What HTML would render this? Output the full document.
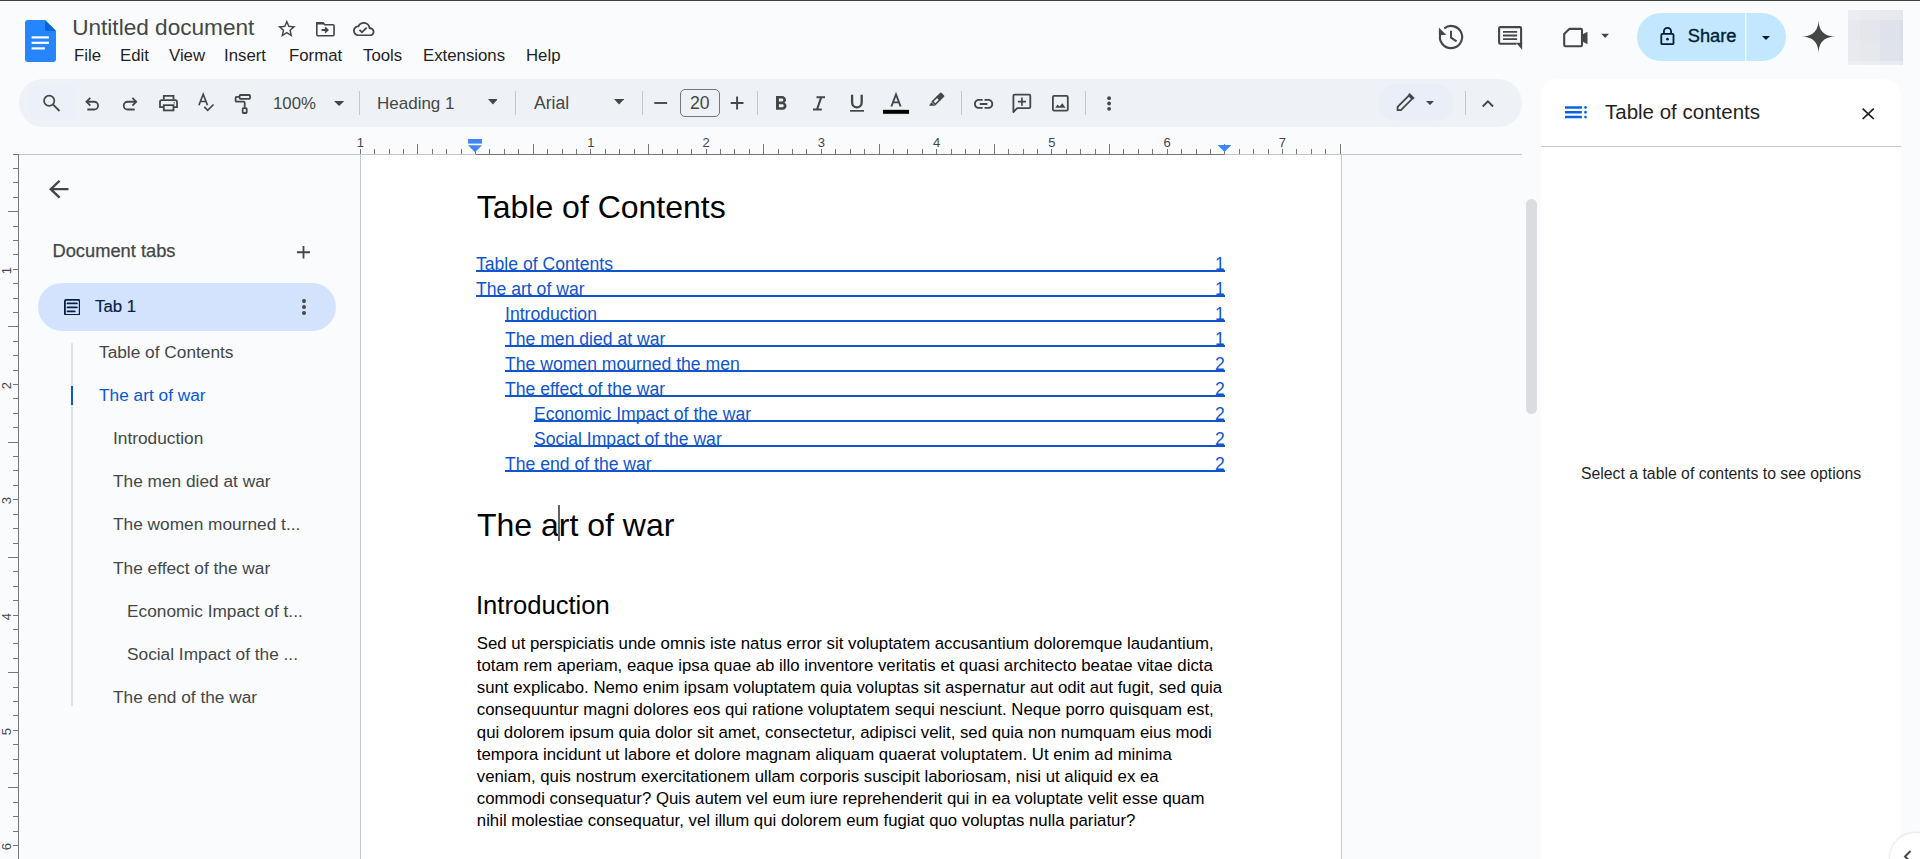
<!DOCTYPE html>
<html><head><meta charset="utf-8"><style>
html,body{margin:0;padding:0;}
body{width:1920px;height:859px;overflow:hidden;position:relative;background:#f9fbfd;font-family:"Liberation Sans",sans-serif;}
.t{position:absolute;white-space:nowrap;}
svg{display:block}
</style></head><body>
<div style="position:absolute;left:0px;top:0px;width:1920px;height:1px;background:#3c4043"></div>
<svg style="position:absolute;left:25px;top:20px;" width="31" height="42" viewBox="0 0 31 42" preserveAspectRatio="none"><path d="M3 0H20L31 11V39Q31 42 28 42H3Q0 42 0 39V3Q0 0 3 0Z" fill="#2684fc"/><path d="M20 0L31 11H22Q20 11 20 9Z" fill="#0066da"/><rect x="6.6" y="16.3" width="17.3" height="2.2" fill="#fff"/><rect x="6.6" y="21.7" width="17.3" height="2.2" fill="#fff"/><rect x="6.6" y="27.3" width="13.3" height="2.2" fill="#fff"/></svg>
<div class="t" style="left:72.2px;top:17px;font-size:22.6px;line-height:22.6px;color:#444746;font-weight:400;">Untitled document</div>
<svg style="position:absolute;left:276.3px;top:17.8px;" width="21.6" height="21.6" viewBox="0 0 24 24" preserveAspectRatio="none"><path d="M22 9.24l-7.19-.62L12 2 9.19 8.63 2 9.24l5.46 4.73L5.82 21 12 17.27 18.18 21l-1.63-7.03L22 9.24zM12 15.4l-3.76 2.27 1-4.28-3.32-2.88 4.38-.38L12 6.1l1.71 4.04 4.38.38-3.32 2.88 1 4.28L12 15.4z" fill="#444746"/></svg>
<svg style="position:absolute;left:316.3px;top:22px;overflow:visible;" width="19.6" height="14.6" viewBox="0.1 1.3 21.8 15.4" preserveAspectRatio="none"><path d="M2 2.2h6l2 2h9q1.2 0 1.2 1.2v9.2q0 1.2-1.2 1.2H2.2q-1.2 0-1.2-1.2V2.2z" fill="none" stroke="#444746" stroke-width="1.8"/><path d="M1.2 1.5h6.5l2.4 2.4H1.2z" fill="#444746"/><path d="M6.3 9.7h6.2M10.2 6.9l2.9 2.8-2.9 2.8" fill="none" stroke="#444746" stroke-width="2"/></svg>
<svg style="position:absolute;left:353.4px;top:22px;" width="21.5" height="14.2" viewBox="0 4 24 16" preserveAspectRatio="none"><path d="M19.35 10.04C18.67 6.59 15.64 4 12 4 9.11 4 6.6 5.64 5.35 8.04 2.34 8.36 0 10.91 0 14c0 3.31 2.69 6 6 6h13c2.76 0 5-2.24 5-5 0-2.64-2.05-4.78-4.65-4.960zM19 18H6c-2.21 0-4-1.790-4-4 0-2.05 1.53-3.76 3.56-3.97l1.07-.11.5-.95C8.08 7.14 9.94 6 12 6c2.62 0 4.88 1.86 5.39 4.43l.3 1.5 1.53.11c1.56.1 2.78 1.41 2.780 2.96 0 1.650-1.35 3-3 3zm-9-3.82l-2.09-2.09L6.5 13.5 10 17l6.01-6.01-1.41-1.41z" fill="#444746"/></svg>
<div class="t" style="left:74px;top:48px;font-size:16.8px;line-height:16.8px;color:#1f1f1f;font-weight:400;">File</div>
<div class="t" style="left:120px;top:48px;font-size:16.8px;line-height:16.8px;color:#1f1f1f;font-weight:400;">Edit</div>
<div class="t" style="left:169px;top:48px;font-size:16.8px;line-height:16.8px;color:#1f1f1f;font-weight:400;">View</div>
<div class="t" style="left:224px;top:48px;font-size:16.8px;line-height:16.8px;color:#1f1f1f;font-weight:400;">Insert</div>
<div class="t" style="left:289px;top:48px;font-size:16.8px;line-height:16.8px;color:#1f1f1f;font-weight:400;">Format</div>
<div class="t" style="left:363px;top:48px;font-size:16.8px;line-height:16.8px;color:#1f1f1f;font-weight:400;">Tools</div>
<div class="t" style="left:423px;top:48px;font-size:16.8px;line-height:16.8px;color:#1f1f1f;font-weight:400;">Extensions</div>
<div class="t" style="left:526px;top:48px;font-size:16.8px;line-height:16.8px;color:#1f1f1f;font-weight:400;">Help</div>
<svg style="position:absolute;left:0;top:0" width="1920" height="70" viewBox="0 0 1920 70"><path d="M1440.3 34.2A11.1 11.1 0 1 0 1444.2 28.3" fill="none" stroke="#444746" stroke-width="2.1"/><path d="M1438.9 27.6V35H1446.3Z" fill="#444746"/><path d="M1451 30.8V37.6L1456.6 41.3" fill="none" stroke="#444746" stroke-width="2"/><path d="M1516.5 43.7H1500.3Q1499.1 43.7 1499.1 42.5V28.3Q1499.1 27.1 1500.3 27.1H1519.9Q1521.1 27.1 1521.1 28.3V44" fill="none" stroke="#444746" stroke-width="2.1"/><path d="M1516 42.7H1522.1V49.7Z" fill="#444746"/><path d="M1503 31.8H1517.1M1503 35.5H1517.1M1503 39.1H1517.1" stroke="#444746" stroke-width="1.8"/><path d="M1569.3 28.9H1580.8Q1582 28.9 1582 30.1V45Q1582 46.2 1580.8 46.2H1565.4Q1564.2 46.2 1564.2 45V34Z" fill="none" stroke="#444746" stroke-width="2.1" stroke-linejoin="round"/><path d="M1581 35.3L1587.5 31.7V44.3L1581 40.7Z" fill="#444746"/><path d="M1601.3 33.8H1609L1605.15 38Z" fill="#444746"/><path d="M1661 13H1762A24 24 0 0 1 1762 61H1661A24 24 0 0 1 1661 13Z" fill="#c2e7ff"/><rect x="1745" y="13" width="1.3" height="48" fill="#f9fbfd"/><rect x="1661.3" y="33.9" width="12.2" height="10.3" rx="1" fill="none" stroke="#001d35" stroke-width="1.8"/><path d="M1663.9 33.9V31.4A3.6 3.6 0 0 1 1671.1 31.4V33.9" fill="none" stroke="#001d35" stroke-width="1.8"/><circle cx="1667.5" cy="39.2" r="1.35" fill="#001d35"/><path d="M1762 35.9H1770L1766 40Z" fill="#001d35"/><path d="M1835.90,36.60L1835.86,36.60L1835.73,36.60L1835.52,36.60L1835.23,36.61L1834.87,36.62L1834.43,36.63L1833.92,36.66L1833.36,36.70L1832.74,36.76L1832.07,36.84L1831.36,36.94L1830.62,37.08L1829.86,37.24L1829.08,37.45L1828.29,37.69L1827.50,37.97L1826.72,38.30L1825.95,38.68L1825.21,39.10L1824.49,39.57L1823.81,40.09L1823.16,40.65L1822.55,41.26L1821.99,41.91L1821.47,42.59L1821.00,43.31L1820.58,44.05L1820.20,44.82L1819.87,45.60L1819.59,46.39L1819.35,47.18L1819.14,47.96L1818.98,48.72L1818.84,49.46L1818.74,50.17L1818.66,50.84L1818.60,51.46L1818.56,52.02L1818.53,52.53L1818.52,52.97L1818.51,53.33L1818.50,53.62L1818.50,53.83L1818.50,53.96L1818.50,54.00L1818.50,53.96L1818.50,53.83L1818.50,53.62L1818.49,53.33L1818.48,52.97L1818.47,52.53L1818.44,52.02L1818.40,51.46L1818.34,50.84L1818.26,50.17L1818.16,49.46L1818.02,48.72L1817.86,47.96L1817.65,47.18L1817.41,46.39L1817.13,45.60L1816.80,44.82L1816.42,44.05L1816.00,43.31L1815.53,42.59L1815.01,41.91L1814.45,41.26L1813.84,40.65L1813.19,40.09L1812.51,39.57L1811.79,39.10L1811.05,38.68L1810.28,38.30L1809.50,37.97L1808.71,37.69L1807.92,37.45L1807.14,37.24L1806.38,37.08L1805.64,36.94L1804.93,36.84L1804.26,36.76L1803.64,36.70L1803.08,36.66L1802.57,36.63L1802.13,36.62L1801.77,36.61L1801.48,36.60L1801.27,36.60L1801.14,36.60L1801.10,36.60L1801.14,36.60L1801.27,36.60L1801.48,36.60L1801.77,36.59L1802.13,36.58L1802.57,36.57L1803.08,36.54L1803.64,36.50L1804.26,36.44L1804.93,36.36L1805.64,36.26L1806.38,36.12L1807.14,35.96L1807.92,35.75L1808.71,35.51L1809.50,35.23L1810.28,34.90L1811.05,34.52L1811.79,34.10L1812.51,33.63L1813.19,33.11L1813.84,32.55L1814.45,31.94L1815.01,31.29L1815.53,30.61L1816.00,29.89L1816.42,29.15L1816.80,28.38L1817.13,27.60L1817.41,26.81L1817.65,26.02L1817.86,25.24L1818.02,24.48L1818.16,23.74L1818.26,23.03L1818.34,22.36L1818.40,21.74L1818.44,21.18L1818.47,20.67L1818.48,20.23L1818.49,19.87L1818.50,19.58L1818.50,19.37L1818.50,19.24L1818.50,19.20L1818.50,19.24L1818.50,19.37L1818.50,19.58L1818.51,19.87L1818.52,20.23L1818.53,20.67L1818.56,21.18L1818.60,21.74L1818.66,22.36L1818.74,23.03L1818.84,23.74L1818.98,24.48L1819.14,25.24L1819.35,26.02L1819.59,26.81L1819.87,27.60L1820.20,28.38L1820.58,29.15L1821.00,29.89L1821.47,30.61L1821.99,31.29L1822.55,31.94L1823.16,32.55L1823.81,33.11L1824.49,33.63L1825.21,34.10L1825.95,34.52L1826.72,34.90L1827.50,35.23L1828.29,35.51L1829.08,35.75L1829.86,35.96L1830.62,36.12L1831.36,36.26L1832.07,36.36L1832.74,36.44L1833.36,36.50L1833.92,36.54L1834.43,36.57L1834.87,36.58L1835.23,36.59L1835.52,36.60L1835.73,36.60L1835.86,36.60L1835.90,36.60Z" fill="#444746"/><rect x="1848" y="10" width="12" height="10" fill="#ecedf0"/><rect x="1860" y="10" width="20" height="10" fill="#ebebef"/><rect x="1880" y="10" width="20" height="10" fill="#e8e9ed"/><rect x="1900" y="10" width="3" height="10" fill="#e5e7ee"/><rect x="1848" y="20" width="12" height="21" fill="#e8e9ee"/><rect x="1860" y="20" width="20" height="21" fill="#e4e6eb"/><rect x="1880" y="20" width="20" height="21" fill="#dfe2ea"/><rect x="1900" y="20" width="3" height="21" fill="#d9dee9"/><rect x="1848" y="41" width="12" height="20" fill="#e8eaee"/><rect x="1860" y="41" width="20" height="20" fill="#e6e8ec"/><rect x="1880" y="41" width="20" height="20" fill="#e0e3ea"/><rect x="1900" y="41" width="3" height="20" fill="#dadfea"/><rect x="1848" y="61" width="12" height="4" fill="#edeff2"/><rect x="1860" y="61" width="20" height="4" fill="#eceef1"/><rect x="1880" y="61" width="20" height="4" fill="#e9ebf0"/><rect x="1900" y="61" width="3" height="4" fill="#e3e7ef"/></svg>
<div class="t" style="left:1687.7px;top:27px;font-size:18.3px;line-height:18.3px;color:#001d35;font-weight:400;-webkit-text-stroke:0.35px #001d35;">Share</div>
<div style="position:absolute;left:19px;top:79px;width:1503px;height:48px;background:#eef2f7;border-radius:24px"></div>
<div style="position:absolute;left:30px;top:86px;width:45px;height:34px;background:#ebf0f9"></div>
<div style="position:absolute;left:1378px;top:84px;width:76px;height:37px;background:#e9eef9;border-radius:19px"></div>
<div class="t" style="left:273px;top:96px;font-size:16.8px;line-height:16.8px;color:#444746;font-weight:400;">100%</div>
<svg style="position:absolute;left:333.5px;top:101px;" width="10.199999999999989" height="5" viewBox="0 0 10.199999999999989 5" preserveAspectRatio="none"><path d="M0 0H10.199999999999989L5.099999999999994 5Z" fill="#444746"/></svg>
<div style="position:absolute;left:359px;top:91px;width:1px;height:24px;background:#c7c7c7"></div>
<div class="t" style="left:377px;top:95px;font-size:17px;line-height:17px;color:#444746;font-weight:400;">Heading 1</div>
<svg style="position:absolute;left:487.6px;top:99px;" width="9.799999999999955" height="5.5" viewBox="0 0 9.799999999999955 5.5" preserveAspectRatio="none"><path d="M0 0H9.799999999999955L4.899999999999977 5.5Z" fill="#444746"/></svg>
<div style="position:absolute;left:515px;top:91px;width:1px;height:24px;background:#c7c7c7"></div>
<div class="t" style="left:534px;top:95px;font-size:17.6px;line-height:17.6px;color:#444746;font-weight:400;">Arial</div>
<svg style="position:absolute;left:613.6px;top:99px;" width="10.199999999999932" height="5.5" viewBox="0 0 10.199999999999932 5.5" preserveAspectRatio="none"><path d="M0 0H10.199999999999932L5.099999999999966 5.5Z" fill="#444746"/></svg>
<div style="position:absolute;left:642px;top:91px;width:1px;height:24px;background:#c7c7c7"></div>
<div style="position:absolute;left:680px;top:89px;width:38px;height:26px;border:1.2px solid #747775;border-radius:5px"></div>
<div class="t" style="left:690px;top:95px;font-size:17.6px;line-height:17.6px;color:#444746;font-weight:400;">20</div>
<div style="position:absolute;left:757px;top:91px;width:1px;height:24px;background:#c7c7c7"></div>
<svg style="position:absolute;left:775.6px;top:96.3px;overflow:visible;" width="10.5" height="13.7" viewBox="7 4 10.75 14" preserveAspectRatio="none"><path d="M15.6 10.79c.97-.67 1.65-1.77 1.65-2.79 0-2.26-1.75-4-4-4H7v14h7.04c2.09 0 3.71-1.7 3.71-3.79 0-1.52-.86-2.82-2.15-3.42zM10 6.5h3c.83 0 1.5.67 1.5 1.5s-.67 1.5-1.5 1.5h-3v-3zm3.5 9H10v-3h3.5c.83 0 1.5.67 1.5 1.5s-.67 1.5-1.5 1.5z" fill="#444746"/></svg>
<div style="position:absolute;left:960.5px;top:91px;width:1px;height:24px;background:#c7c7c7"></div>
<svg style="position:absolute;left:973.8px;top:98.8px;overflow:visible;" width="19.2" height="9.8" viewBox="2 7 20 10" preserveAspectRatio="none"><path d="M3.9 12c0-1.71 1.39-3.1 3.1-3.1h4V7H7c-2.76 0-5 2.24-5 5s2.24 5 5 5h4v-1.9H7c-1.71 0-3.1-1.39-3.1-3.1zM8 13h8v-2H8v2zm9-6h-4v1.9h4c1.71 0 3.1 1.39 3.1 3.1s-1.39 3.1-3.1 3.1h-4V17h4c2.76 0 5-2.24 5-5s-2.24-5-5-5z" fill="#444746"/></svg>
<div style="position:absolute;left:1085px;top:91px;width:1px;height:24px;background:#c7c7c7"></div>
<svg style="position:absolute;left:1426px;top:100.7px;" width="8" height="4.099999999999994" viewBox="0 0 8 4.099999999999994" preserveAspectRatio="none"><path d="M0 0H8L4.0 4.099999999999994Z" fill="#444746"/></svg>
<div style="position:absolute;left:1465px;top:91px;width:1px;height:24px;background:#c7c7c7"></div>
<svg style="position:absolute;left:0;top:0" width="1920" height="130" viewBox="0 0 1920 130"><circle cx="49.2" cy="100.7" r="5.15" fill="none" stroke="#444746" stroke-width="1.7"/><path d="M52.9 104.4L59.5 111" stroke="#444746" stroke-width="1.8"/><path d="M90.3 97.9L86.5 101.75L90.3 105.6" fill="none" stroke="#444746" stroke-width="1.8"/><path d="M86.5 101.75H94.2A3.875 3.875 0 0 1 94.2 109.5H87.3" fill="none" stroke="#444746" stroke-width="1.8"/><path d="M132.4 97.9L136.2 101.75L132.4 105.6" fill="none" stroke="#444746" stroke-width="1.8"/><path d="M136.2 101.75H127.6A3.875 3.875 0 0 0 127.6 109.5H134.7" fill="none" stroke="#444746" stroke-width="1.8"/><path d="M163.8 99.6V95.9H173.5V99.6" fill="none" stroke="#444746" stroke-width="1.8"/><path d="M163.8 107.2H160V101.9Q160 100.1 161.8 100.1H175.2Q177 100.1 177 101.9V107.2H173.5" fill="none" stroke="#444746" stroke-width="1.8"/><rect x="163.8" y="105.2" width="9.7" height="5.2" fill="none" stroke="#444746" stroke-width="1.8"/><circle cx="174.2" cy="102.7" r="0.75" fill="#444746"/><path d="M198.9 105.3L203.2 94.3L207.5 105.3M200.3 101.5H206.1" fill="none" stroke="#444746" stroke-width="1.7"/><path d="M204.3 106.9L207.7 110.3L213.5 104.5" fill="none" stroke="#444746" stroke-width="1.7"/><rect x="239.6" y="95" width="10.4" height="3.9" rx="0.8" fill="none" stroke="#444746" stroke-width="1.8"/><path d="M239.6 96.9H236.6Q235.6 96.9 235.6 97.9V100.7Q235.6 101.7 236.6 101.7H243.7Q244.7 101.7 244.7 102.7V107.6" fill="none" stroke="#444746" stroke-width="1.8"/><rect x="242.7" y="108.1" width="4" height="4.9" rx="0.7" fill="none" stroke="#444746" stroke-width="1.8"/><path d="M654.3 103H667.1" stroke="#444746" stroke-width="1.9"/><path d="M730.7 103H743.5M737.1 96.5V109.5" stroke="#444746" stroke-width="1.9"/><path d="M816.5 97.2H825M813 109.5H821.8M821.3 97.2L817 109.5" stroke="#444746" stroke-width="2.1"/><path d="M852.1 94.8V102.5A4.8 4.8 0 0 0 861.7 102.5V94.8" fill="none" stroke="#444746" stroke-width="2.3"/><rect x="850" y="110" width="14" height="1.7" fill="#444746"/><path d="M891.4 106.5L896 94.4L900.6 106.5M893.1 102.4H898.9" fill="none" stroke="#444746" stroke-width="1.9"/><rect x="882.5" y="109.3" width="27" height="4.9" fill="#000" stroke="#fff" stroke-width="0.8"/><g transform="translate(931.4 101.6) rotate(-45)"><rect x="6.6" y="0" width="6.8" height="5.5" rx="0.9" fill="#444746"/><rect x="0.8" y="0.8" width="6.6" height="3.9" fill="none" stroke="#444746" stroke-width="1.6"/></g><path d="M929 105.8L931.3 102.2L935.4 105.8Z" fill="#444746"/><path d="M1013.4 112V95.8Q1013.4 94.7 1014.5 94.7H1029.2Q1030.3 94.7 1030.3 95.8V107.1Q1030.3 108.2 1029.2 108.2H1017.2Z" fill="none" stroke="#444746" stroke-width="1.8" stroke-linejoin="round"/><path d="M1017.9 101.6H1026M1021.95 97.4V105.8" stroke="#444746" stroke-width="1.7"/><rect x="1052.9" y="95.8" width="14.9" height="14.9" rx="1.2" fill="none" stroke="#444746" stroke-width="1.8"/><path d="M1055.2 107.8L1057.6 104.4L1059.6 106.6L1062.3 103.3L1065.6 107.8Z" fill="#444746"/><circle cx="1109.1" cy="98.2" r="1.9" fill="#444746"/><circle cx="1109.1" cy="103.5" r="1.9" fill="#444746"/><circle cx="1109.1" cy="108.8" r="1.9" fill="#444746"/><path d="M1397.6 110.1V106.8L1408.9 95.5L1412.2 98.8L1400.9 110.1Z" fill="none" stroke="#444746" stroke-width="1.8" stroke-linejoin="miter"/><path d="M1408.2 94.2L1409.7 92.9L1414.7 97.9L1413.3 99.4Z" fill="#444746"/><path d="M1482.7 106.5L1487.9 101.3L1493.1 106.5" fill="none" stroke="#444746" stroke-width="1.9"/></svg>
<svg style="position:absolute;left:0;top:0" width="1920" height="859" viewBox="0 0 1920 859"><rect x="13" y="154" width="462.6" height="1" fill="#c4c7c5"/><rect x="475.6" y="154" width="749.2" height="1" fill="#747775"/><rect x="1224.8" y="154" width="297.2" height="1" fill="#c4c7c5"/><rect x="13" y="154" width="6" height="1" fill="#747775"/><rect x="360" y="149" width="1" height="5" fill="#747775"/><rect x="374" y="149" width="1" height="5" fill="#747775"/><rect x="389" y="149" width="1" height="5" fill="#747775"/><rect x="403" y="149" width="1" height="5" fill="#747775"/><rect x="417" y="144" width="1" height="10" fill="#747775"/><rect x="432" y="149" width="1" height="5" fill="#747775"/><rect x="446" y="149" width="1" height="5" fill="#747775"/><rect x="461" y="149" width="1" height="5" fill="#747775"/><rect x="475" y="149" width="1" height="5" fill="#747775"/><rect x="489" y="149" width="1" height="5" fill="#747775"/><rect x="504" y="149" width="1" height="5" fill="#747775"/><rect x="518" y="149" width="1" height="5" fill="#747775"/><rect x="533" y="144" width="1" height="10" fill="#747775"/><rect x="547" y="149" width="1" height="5" fill="#747775"/><rect x="562" y="149" width="1" height="5" fill="#747775"/><rect x="576" y="149" width="1" height="5" fill="#747775"/><rect x="590" y="149" width="1" height="5" fill="#747775"/><rect x="605" y="149" width="1" height="5" fill="#747775"/><rect x="619" y="149" width="1" height="5" fill="#747775"/><rect x="634" y="149" width="1" height="5" fill="#747775"/><rect x="648" y="144" width="1" height="10" fill="#747775"/><rect x="662" y="149" width="1" height="5" fill="#747775"/><rect x="677" y="149" width="1" height="5" fill="#747775"/><rect x="691" y="149" width="1" height="5" fill="#747775"/><rect x="706" y="149" width="1" height="5" fill="#747775"/><rect x="720" y="149" width="1" height="5" fill="#747775"/><rect x="734" y="149" width="1" height="5" fill="#747775"/><rect x="749" y="149" width="1" height="5" fill="#747775"/><rect x="763" y="144" width="1" height="10" fill="#747775"/><rect x="778" y="149" width="1" height="5" fill="#747775"/><rect x="792" y="149" width="1" height="5" fill="#747775"/><rect x="806" y="149" width="1" height="5" fill="#747775"/><rect x="821" y="149" width="1" height="5" fill="#747775"/><rect x="835" y="149" width="1" height="5" fill="#747775"/><rect x="850" y="149" width="1" height="5" fill="#747775"/><rect x="864" y="149" width="1" height="5" fill="#747775"/><rect x="879" y="144" width="1" height="10" fill="#747775"/><rect x="893" y="149" width="1" height="5" fill="#747775"/><rect x="907" y="149" width="1" height="5" fill="#747775"/><rect x="922" y="149" width="1" height="5" fill="#747775"/><rect x="936" y="149" width="1" height="5" fill="#747775"/><rect x="951" y="149" width="1" height="5" fill="#747775"/><rect x="965" y="149" width="1" height="5" fill="#747775"/><rect x="979" y="149" width="1" height="5" fill="#747775"/><rect x="994" y="144" width="1" height="10" fill="#747775"/><rect x="1008" y="149" width="1" height="5" fill="#747775"/><rect x="1023" y="149" width="1" height="5" fill="#747775"/><rect x="1037" y="149" width="1" height="5" fill="#747775"/><rect x="1051" y="149" width="1" height="5" fill="#747775"/><rect x="1066" y="149" width="1" height="5" fill="#747775"/><rect x="1080" y="149" width="1" height="5" fill="#747775"/><rect x="1095" y="149" width="1" height="5" fill="#747775"/><rect x="1109" y="144" width="1" height="10" fill="#747775"/><rect x="1123" y="149" width="1" height="5" fill="#747775"/><rect x="1138" y="149" width="1" height="5" fill="#747775"/><rect x="1152" y="149" width="1" height="5" fill="#747775"/><rect x="1167" y="149" width="1" height="5" fill="#747775"/><rect x="1181" y="149" width="1" height="5" fill="#747775"/><rect x="1196" y="149" width="1" height="5" fill="#747775"/><rect x="1210" y="149" width="1" height="5" fill="#747775"/><rect x="1224" y="144" width="1" height="10" fill="#747775"/><rect x="1239" y="149" width="1" height="5" fill="#747775"/><rect x="1253" y="149" width="1" height="5" fill="#747775"/><rect x="1268" y="149" width="1" height="5" fill="#747775"/><rect x="1282" y="149" width="1" height="5" fill="#747775"/><rect x="1296" y="149" width="1" height="5" fill="#747775"/><rect x="1311" y="149" width="1" height="5" fill="#747775"/><rect x="1325" y="149" width="1" height="5" fill="#747775"/><rect x="1340" y="144" width="1" height="10" fill="#747775"/><rect x="18" y="154" width="1" height="705" fill="#747775"/><rect x="13" y="154" width="5" height="1" fill="#747775"/><rect x="13" y="168" width="5" height="1" fill="#747775"/><rect x="13" y="182" width="5" height="1" fill="#747775"/><rect x="13" y="197" width="5" height="1" fill="#747775"/><rect x="8" y="211" width="10" height="1" fill="#747775"/><rect x="13" y="226" width="5" height="1" fill="#747775"/><rect x="13" y="240" width="5" height="1" fill="#747775"/><rect x="13" y="254" width="5" height="1" fill="#747775"/><rect x="13" y="269" width="5" height="1" fill="#747775"/><rect x="13" y="283" width="5" height="1" fill="#747775"/><rect x="13" y="298" width="5" height="1" fill="#747775"/><rect x="13" y="312" width="5" height="1" fill="#747775"/><rect x="8" y="326" width="10" height="1" fill="#747775"/><rect x="13" y="341" width="5" height="1" fill="#747775"/><rect x="13" y="355" width="5" height="1" fill="#747775"/><rect x="13" y="370" width="5" height="1" fill="#747775"/><rect x="13" y="384" width="5" height="1" fill="#747775"/><rect x="13" y="398" width="5" height="1" fill="#747775"/><rect x="13" y="413" width="5" height="1" fill="#747775"/><rect x="13" y="427" width="5" height="1" fill="#747775"/><rect x="8" y="442" width="10" height="1" fill="#747775"/><rect x="13" y="456" width="5" height="1" fill="#747775"/><rect x="13" y="470" width="5" height="1" fill="#747775"/><rect x="13" y="485" width="5" height="1" fill="#747775"/><rect x="13" y="499" width="5" height="1" fill="#747775"/><rect x="13" y="514" width="5" height="1" fill="#747775"/><rect x="13" y="528" width="5" height="1" fill="#747775"/><rect x="13" y="543" width="5" height="1" fill="#747775"/><rect x="8" y="557" width="10" height="1" fill="#747775"/><rect x="13" y="571" width="5" height="1" fill="#747775"/><rect x="13" y="586" width="5" height="1" fill="#747775"/><rect x="13" y="600" width="5" height="1" fill="#747775"/><rect x="13" y="615" width="5" height="1" fill="#747775"/><rect x="13" y="629" width="5" height="1" fill="#747775"/><rect x="13" y="643" width="5" height="1" fill="#747775"/><rect x="13" y="658" width="5" height="1" fill="#747775"/><rect x="8" y="672" width="10" height="1" fill="#747775"/><rect x="13" y="687" width="5" height="1" fill="#747775"/><rect x="13" y="701" width="5" height="1" fill="#747775"/><rect x="13" y="715" width="5" height="1" fill="#747775"/><rect x="13" y="730" width="5" height="1" fill="#747775"/><rect x="13" y="744" width="5" height="1" fill="#747775"/><rect x="13" y="759" width="5" height="1" fill="#747775"/><rect x="13" y="773" width="5" height="1" fill="#747775"/><rect x="8" y="787" width="10" height="1" fill="#747775"/><rect x="13" y="802" width="5" height="1" fill="#747775"/><rect x="13" y="816" width="5" height="1" fill="#747775"/><rect x="13" y="831" width="5" height="1" fill="#747775"/><rect x="13" y="845" width="5" height="1" fill="#747775"/><rect x="468" y="139" width="14" height="4.6" fill="#4285f4"/><path d="M468 145.2H482L475 152.3Z" fill="#4285f4"/><path d="M1217.6 144.9H1231.4L1224.5 151.9Z" fill="#4285f4"/></svg>
<div class="t" style="left:340.30px;top:136px;width:40px;text-align:center;font-size:13px;line-height:13px;color:#444746">1</div>
<div class="t" style="left:570.84px;top:136px;width:40px;text-align:center;font-size:13px;line-height:13px;color:#444746">1</div>
<div class="t" style="left:686.11px;top:136px;width:40px;text-align:center;font-size:13px;line-height:13px;color:#444746">2</div>
<div class="t" style="left:801.38px;top:136px;width:40px;text-align:center;font-size:13px;line-height:13px;color:#444746">3</div>
<div class="t" style="left:916.65px;top:136px;width:40px;text-align:center;font-size:13px;line-height:13px;color:#444746">4</div>
<div class="t" style="left:1031.92px;top:136px;width:40px;text-align:center;font-size:13px;line-height:13px;color:#444746">5</div>
<div class="t" style="left:1147.19px;top:136px;width:40px;text-align:center;font-size:13px;line-height:13px;color:#444746">6</div>
<div class="t" style="left:1262.46px;top:136px;width:40px;text-align:center;font-size:13px;line-height:13px;color:#444746">7</div>
<div class="t" style="left:-14px;top:263.77px;width:40px;text-align:center;font-size:13px;line-height:13px;color:#444746;transform:rotate(-90deg)">1</div>
<div class="t" style="left:-14px;top:379.04px;width:40px;text-align:center;font-size:13px;line-height:13px;color:#444746;transform:rotate(-90deg)">2</div>
<div class="t" style="left:-14px;top:494.31px;width:40px;text-align:center;font-size:13px;line-height:13px;color:#444746;transform:rotate(-90deg)">3</div>
<div class="t" style="left:-14px;top:609.58px;width:40px;text-align:center;font-size:13px;line-height:13px;color:#444746;transform:rotate(-90deg)">4</div>
<div class="t" style="left:-14px;top:724.85px;width:40px;text-align:center;font-size:13px;line-height:13px;color:#444746;transform:rotate(-90deg)">5</div>
<div class="t" style="left:-14px;top:840.12px;width:40px;text-align:center;font-size:13px;line-height:13px;color:#444746;transform:rotate(-90deg)">6</div>
<svg style="position:absolute;left:49.3px;top:180px;overflow:visible;" width="19.5" height="18.4" viewBox="4 4 16 16" preserveAspectRatio="none"><path d="M20 11H7.83l5.59-5.59L12 4l-8 8 8 8 1.41-1.41L7.83 13H20v-2z" fill="#444746"/></svg>
<div class="t" style="left:52.5px;top:242px;font-size:18.3px;line-height:18.3px;color:#444746;font-weight:400;-webkit-text-stroke:0.25px #444746;">Document tabs</div>
<svg style="position:absolute;left:297px;top:246px;" width="13" height="12.5" viewBox="0 0 13 12.5" preserveAspectRatio="none"><path d="M0 6.25H13M6.5 0V12.5" stroke="#444746" stroke-width="1.8"/></svg>
<div style="position:absolute;left:38px;top:283px;width:298px;height:48px;background:#d3e3fd;border-radius:24px"></div>
<svg style="position:absolute;left:63.9px;top:298.7px;" width="16.6" height="16.8" viewBox="0 0 16.6 16.8" preserveAspectRatio="none"><rect x="0.9" y="0.9" width="14.8" height="15" rx="1.3" fill="none" stroke="#041e49" stroke-width="1.8"/><path d="M3.5 4.4H12.9M3.5 8.4H12.9M3.5 12.4H10.8" stroke="#041e49" stroke-width="1.7" stroke-linecap="round"/></svg>
<div class="t" style="left:95px;top:299px;font-size:16.8px;line-height:16.8px;color:#041e49;font-weight:400;-webkit-text-stroke:0.2px #041e49;">Tab 1</div>
<div style="position:absolute;left:302px;top:298.8px;width:4px;height:4px;background:#444746;border-radius:2px"></div>
<div style="position:absolute;left:302px;top:304.7px;width:4px;height:4px;background:#444746;border-radius:2px"></div>
<div style="position:absolute;left:302px;top:310.6px;width:4px;height:4px;background:#444746;border-radius:2px"></div>
<div style="position:absolute;left:71px;top:343px;width:2px;height:363px;background:#e1e3e1"></div>
<div style="position:absolute;left:71px;top:386px;width:2px;height:19px;background:#0b57d0"></div>
<div class="t" style="left:99px;top:344px;font-size:17.3px;line-height:17.3px;color:#444746;font-weight:400;">Table of Contents</div>
<div class="t" style="left:99px;top:387px;font-size:17.3px;line-height:17.3px;color:#0b57d0;font-weight:400;">The art of war</div>
<div class="t" style="left:113px;top:430px;font-size:17.3px;line-height:17.3px;color:#444746;font-weight:400;">Introduction</div>
<div class="t" style="left:113px;top:473px;font-size:17.3px;line-height:17.3px;color:#444746;font-weight:400;">The men died at war</div>
<div class="t" style="left:113px;top:516px;font-size:17.3px;line-height:17.3px;color:#444746;font-weight:400;">The women mourned t...</div>
<div class="t" style="left:113px;top:560px;font-size:17.3px;line-height:17.3px;color:#444746;font-weight:400;">The effect of the war</div>
<div class="t" style="left:127px;top:603px;font-size:17.3px;line-height:17.3px;color:#444746;font-weight:400;">Economic Impact of t...</div>
<div class="t" style="left:127px;top:646px;font-size:17.3px;line-height:17.3px;color:#444746;font-weight:400;">Social Impact of the ...</div>
<div class="t" style="left:113px;top:689px;font-size:17.3px;line-height:17.3px;color:#444746;font-weight:400;">The end of the war</div>
<div style="position:absolute;left:360px;top:155px;width:982px;height:704px;background:#fff;border-left:1px solid #c7c7c7;border-right:1px solid #c7c7c7;box-sizing:border-box"></div>
<div class="t" style="left:476.7px;top:191px;font-size:32px;line-height:32px;color:#000;font-weight:400;">Table of Contents</div>
<div style="position:absolute;left:476px;top:270.00px;width:748.8px;height:2px;background:#1155cc"></div>
<div class="t" style="left:476px;top:256px;font-size:17.6px;line-height:17.6px;color:#1155cc;font-weight:400;">Table of Contents</div>
<div class="t" style="left:1124.8px;width:100px;text-align:right;top:256px;font-size:17.6px;line-height:17.6px;color:#1155cc">1</div>
<div style="position:absolute;left:476px;top:294.97px;width:748.8px;height:2px;background:#1155cc"></div>
<div class="t" style="left:476px;top:281px;font-size:17.6px;line-height:17.6px;color:#1155cc;font-weight:400;">The art of war</div>
<div class="t" style="left:1124.8px;width:100px;text-align:right;top:281px;font-size:17.6px;line-height:17.6px;color:#1155cc">1</div>
<div style="position:absolute;left:505px;top:319.94px;width:719.8px;height:2px;background:#1155cc"></div>
<div class="t" style="left:505px;top:306px;font-size:17.6px;line-height:17.6px;color:#1155cc;font-weight:400;">Introduction</div>
<div class="t" style="left:1124.8px;width:100px;text-align:right;top:306px;font-size:17.6px;line-height:17.6px;color:#1155cc">1</div>
<div style="position:absolute;left:505px;top:344.91px;width:719.8px;height:2px;background:#1155cc"></div>
<div class="t" style="left:505px;top:331px;font-size:17.6px;line-height:17.6px;color:#1155cc;font-weight:400;">The men died at war</div>
<div class="t" style="left:1124.8px;width:100px;text-align:right;top:331px;font-size:17.6px;line-height:17.6px;color:#1155cc">1</div>
<div style="position:absolute;left:505px;top:369.88px;width:719.8px;height:2px;background:#1155cc"></div>
<div class="t" style="left:505px;top:356px;font-size:17.6px;line-height:17.6px;color:#1155cc;font-weight:400;">The women mourned the men</div>
<div class="t" style="left:1124.8px;width:100px;text-align:right;top:356px;font-size:17.6px;line-height:17.6px;color:#1155cc">2</div>
<div style="position:absolute;left:505px;top:394.85px;width:719.8px;height:2px;background:#1155cc"></div>
<div class="t" style="left:505px;top:381px;font-size:17.6px;line-height:17.6px;color:#1155cc;font-weight:400;">The effect of the war</div>
<div class="t" style="left:1124.8px;width:100px;text-align:right;top:381px;font-size:17.6px;line-height:17.6px;color:#1155cc">2</div>
<div style="position:absolute;left:534px;top:419.82px;width:690.8px;height:2px;background:#1155cc"></div>
<div class="t" style="left:534px;top:406px;font-size:17.6px;line-height:17.6px;color:#1155cc;font-weight:400;">Economic Impact of the war</div>
<div class="t" style="left:1124.8px;width:100px;text-align:right;top:406px;font-size:17.6px;line-height:17.6px;color:#1155cc">2</div>
<div style="position:absolute;left:534px;top:444.79px;width:690.8px;height:2px;background:#1155cc"></div>
<div class="t" style="left:534px;top:431px;font-size:17.6px;line-height:17.6px;color:#1155cc;font-weight:400;">Social Impact of the war</div>
<div class="t" style="left:1124.8px;width:100px;text-align:right;top:431px;font-size:17.6px;line-height:17.6px;color:#1155cc">2</div>
<div style="position:absolute;left:505px;top:469.76px;width:719.8px;height:2px;background:#1155cc"></div>
<div class="t" style="left:505px;top:456px;font-size:17.6px;line-height:17.6px;color:#1155cc;font-weight:400;">The end of the war</div>
<div class="t" style="left:1124.8px;width:100px;text-align:right;top:456px;font-size:17.6px;line-height:17.6px;color:#1155cc">2</div>
<div class="t" style="left:477px;top:509px;font-size:32px;line-height:32px;color:#000;font-weight:400;">The art of war</div>
<div style="position:absolute;left:558.4px;top:505px;width:1.2px;height:36px;background:#5f6368"></div>
<div class="t" style="left:476px;top:593px;font-size:25.6px;line-height:25.6px;color:#000;font-weight:400;">Introduction</div>
<div class="t" style="left:476.8px;top:636px;font-size:16.8px;line-height:16.8px;color:#000;font-weight:400;">Sed ut perspiciatis unde omnis iste natus error sit voluptatem accusantium doloremque laudantium,</div>
<div class="t" style="left:476.8px;top:658px;font-size:16.8px;line-height:16.8px;color:#000;font-weight:400;">totam rem aperiam, eaque ipsa quae ab illo inventore veritatis et quasi architecto beatae vitae dicta</div>
<div class="t" style="left:476.8px;top:680px;font-size:16.8px;line-height:16.8px;color:#000;font-weight:400;">sunt explicabo. Nemo enim ipsam voluptatem quia voluptas sit aspernatur aut odit aut fugit, sed quia</div>
<div class="t" style="left:476.8px;top:702px;font-size:16.8px;line-height:16.8px;color:#000;font-weight:400;">consequuntur magni dolores eos qui ratione voluptatem sequi nesciunt. Neque porro quisquam est,</div>
<div class="t" style="left:476.8px;top:725px;font-size:16.8px;line-height:16.8px;color:#000;font-weight:400;">qui dolorem ipsum quia dolor sit amet, consectetur, adipisci velit, sed quia non numquam eius modi</div>
<div class="t" style="left:476.8px;top:747px;font-size:16.8px;line-height:16.8px;color:#000;font-weight:400;">tempora incidunt ut labore et dolore magnam aliquam quaerat voluptatem. Ut enim ad minima</div>
<div class="t" style="left:476.8px;top:769px;font-size:16.8px;line-height:16.8px;color:#000;font-weight:400;">veniam, quis nostrum exercitationem ullam corporis suscipit laboriosam, nisi ut aliquid ex ea</div>
<div class="t" style="left:476.8px;top:791px;font-size:16.8px;line-height:16.8px;color:#000;font-weight:400;">commodi consequatur? Quis autem vel eum iure reprehenderit qui in ea voluptate velit esse quam</div>
<div class="t" style="left:476.8px;top:813px;font-size:16.8px;line-height:16.8px;color:#000;font-weight:400;">nihil molestiae consequatur, vel illum qui dolorem eum fugiat quo voluptas nulla pariatur?</div>
<div style="position:absolute;left:1526px;top:199px;width:11px;height:215px;background:#dadce0;border-radius:6px"></div>
<div style="position:absolute;left:1541px;top:79px;width:360px;height:780px;background:#fff;border-radius:17px 17px 0 0"></div>
<div style="position:absolute;left:1541px;top:146px;width:360px;height:1px;background:#c7c7c7"></div>
<svg style="position:absolute;left:0;top:0" width="1920" height="130"><path d="M1565 107.45H1581.9M1565 112.2H1581.9M1565 117.05H1581.9" stroke="#0b62de" stroke-width="2.5"/><circle cx="1585.5" cy="107.45" r="1.35" fill="#0b62de"/><circle cx="1585.5" cy="112.2" r="1.35" fill="#0b62de"/><circle cx="1585.5" cy="117.05" r="1.35" fill="#0b62de"/></svg>
<div class="t" style="left:1605px;top:102px;font-size:20.5px;line-height:20.5px;color:#1f1f1f;font-weight:400;">Table of contents</div>
<svg style="position:absolute;left:1861.6px;top:108.2px;overflow:visible;" width="12.4" height="11.6" viewBox="5 5 14 14" preserveAspectRatio="none"><path d="M19 6.41L17.59 5 12 10.59 6.41 5 5 6.41 10.59 12 5 17.59 6.41 19 12 13.41 17.59 19 19 17.59 13.41 12z" fill="#1f1f1f"/></svg>
<div class="t" style="left:1581px;top:466px;font-size:15.8px;line-height:15.8px;color:#1f1f1f;font-weight:400;">Select a table of contents to see options</div>
<div style="position:absolute;left:1890px;top:833px;width:50px;height:50px;background:#fff;border-radius:50%;box-shadow:0 0 3px rgba(0,0,0,.18)"></div>
<svg style="position:absolute;left:1903px;top:850px;overflow:visible;" width="9" height="10" viewBox="0 0 9 10" preserveAspectRatio="none"><path d="M7.5 1L2 6.5L7.5 12" fill="none" stroke="#444746" stroke-width="2"/></svg>
</body></html>
